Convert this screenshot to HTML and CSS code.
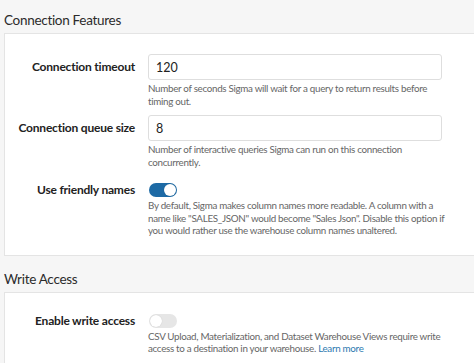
FILE: index.html
```html
<!DOCTYPE html>
<html lang="en">
<head>
  <meta charset="UTF-8">
  <title>Connection Settings</title>
  <link rel="stylesheet" href="styles.css">
</head>
<body>

<div class="section-title">Connection Features</div>
<div class="card">
  <div class="row">
    <label class="row-label">Connection timeout</label>
    <div class="row-body">
      <input type="text" class="field" value="120">
      <p class="hint">Number of seconds Sigma will wait for a query to return results before timing out.</p>
    </div>
  </div>

  <div class="row">
    <label class="row-label">Connection queue size</label>
    <div class="row-body">
      <input type="text" class="field" value="8">
      <p class="hint">Number of interactive queries Sigma can run on this connection concurrently.</p>
    </div>
  </div>

  <div class="row row-toggle">
    <label class="row-label">Use friendly names</label>
    <div class="row-body">
      <span class="toggle on"><span class="knob"></span></span>
      <p class="hint">By default, Sigma makes column names more readable. A column with a name like "SALES_JSON" would become "Sales Json". Disable this option if you would rather use the warehouse column names unaltered.</p>
    </div>
  </div>
</div>

<div class="section-title second">Write Access</div>
<div class="card card-small">
  <div class="row row-toggle">
    <label class="row-label">Enable write access</label>
    <div class="row-body">
      <span class="toggle"><span class="knob"></span></span>
      <p class="hint">CSV Upload, Materialization, and Dataset Warehouse Views require write access to a destination in your warehouse. <a href="#">Learn more</a></p>
    </div>
  </div>
</div>

</body>
</html>
```

FILE: styles.css
```css
body {
  margin: 0;
  background: #f6f6f6;
  font-family: Lato, "Open Sans", sans-serif;
  color: #222;
}

.section-title {
  height: 33px;
  line-height: 40px;
  padding-left: 4px;
  font-size: 13.5px;
  letter-spacing: -0.3px;
  color: #2b2b2b;
}

.section-title.second {
  height: 36px;
  line-height: 46px;
}

.card {
  margin-left: 4px;
  background: white;
  border-top: 1px solid #e4e4e4;
  border-left: 1px solid #e4e4e4;
  border-bottom: 1px solid #e4e4e4;
  padding: 20px 0 18px;
}

.card-small {
  padding: 6px 0 12px;
}

.row {
  display: grid;
  grid-template-columns: 130px 304px;
  column-gap: 13px;
  margin-bottom: 8px;
}

.row:last-child {
  margin-bottom: 0;
}

.row-label {
  text-align: right;
  font-weight: bold;
  font-size: 12px;
  letter-spacing: -0.2px;
  line-height: 26px;
  color: #222;
}

.row-toggle {
  margin-top: 14px;
}

.row-toggle .row-label {
  line-height: 16px;
}

.field {
  box-sizing: border-box;
  width: 294px;
  height: 26px;
  border: 1px solid #dedede;
  border-radius: 3px;
  padding: 0 7px;
  font-family: inherit;
  font-size: 12.5px;
  color: #222;
}

.hint {
  margin: 2px 0 0;
  max-width: 303px;
  font-size: 9.8px;
  letter-spacing: -0.3px;
  line-height: 12.5px;
  color: #666;
}

.hint a {
  color: #2c79b0;
  text-decoration: none;
}

.toggle {
  display: block;
  box-sizing: border-box;
  width: 28px;
  height: 14px;
  border-radius: 7px;
  background: #e6e6e6;
  margin: 1px 0 0 1px;
  position: relative;
}

.toggle .knob {
  position: absolute;
  top: 1px;
  left: 1px;
  width: 12px;
  height: 12px;
  border-radius: 50%;
  background: white;
  box-shadow: 0 0 1px rgba(0,0,0,0.2);
}

.toggle.on {
  background: #1d6aa5;
}

.toggle.on .knob {
  left: 15px;
}
```
